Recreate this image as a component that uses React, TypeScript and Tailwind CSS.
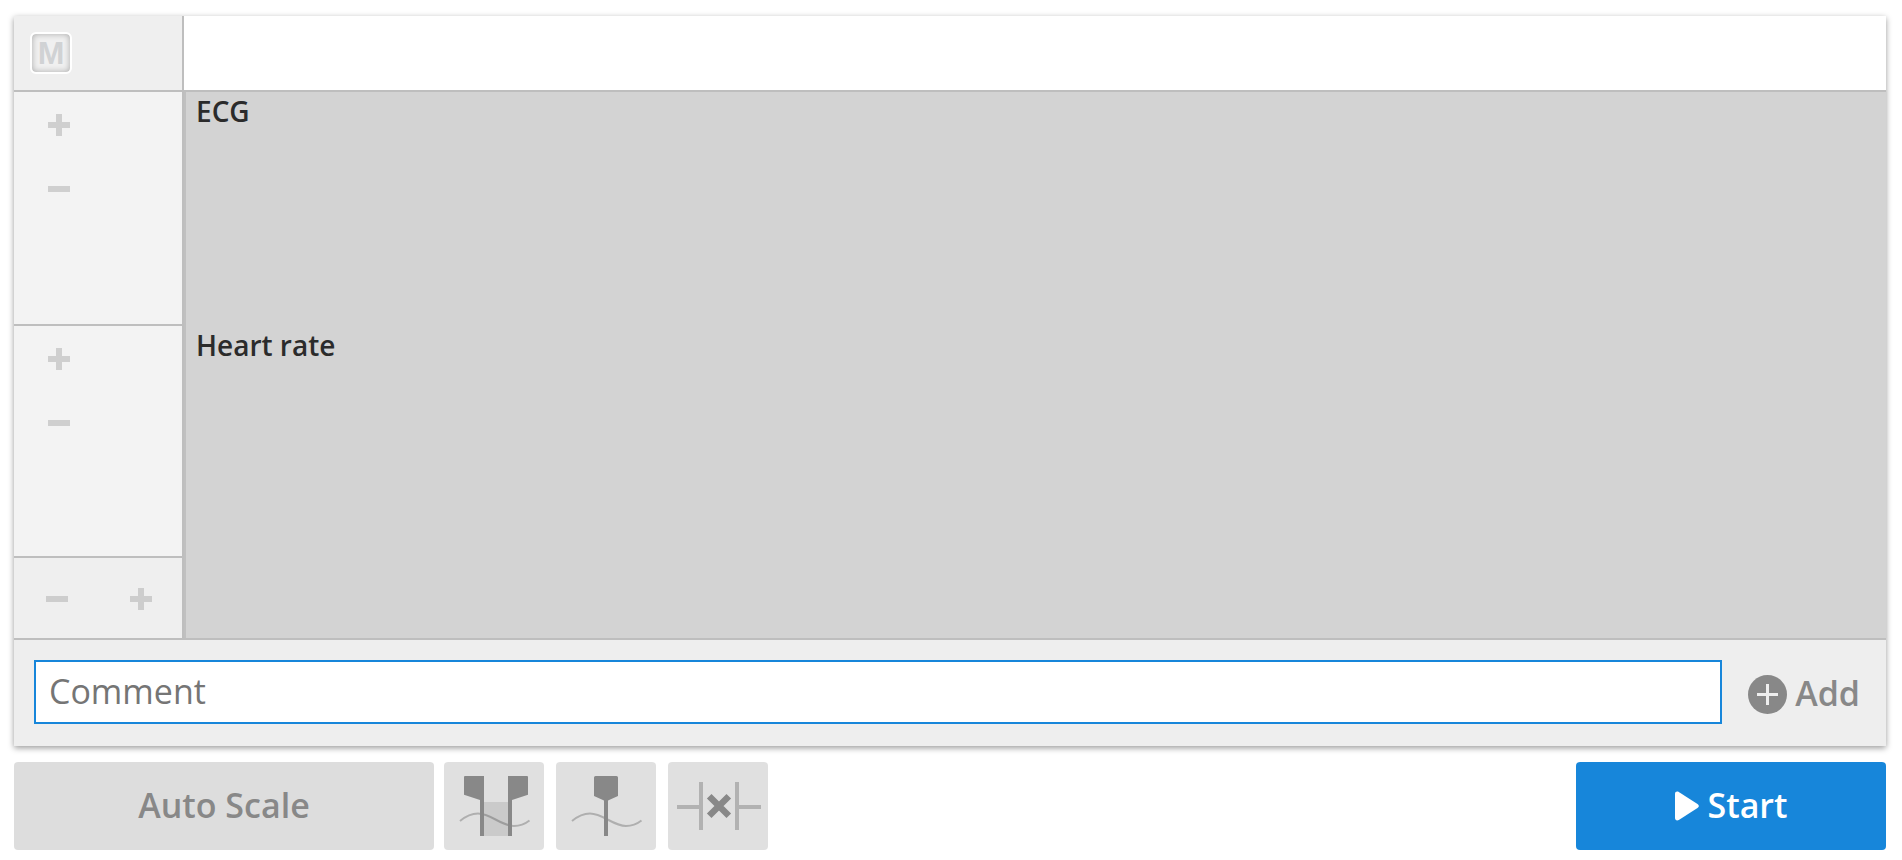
import React, { useState } from 'react';

const CHANNELS = ['ECG', 'Heart rate'];

// Shared by the marker buttons so the signal looks the same in each
const WAVE_PATH = 'M16 59C22 54 28 51.5 34 51.5C47 51.5 57 64 70 64C76 64 81 62 85.5 58.5';

const PlusIcon = () => (
  <svg className="w-[22px] h-[22px]" viewBox="0 0 22 22" fill="currentColor" shapeRendering="crispEdges">
    <path d="M8 0h6v8h8v6h-8v8H8v-8H0V8h8z" />
  </svg>
);

const MinusIcon = () => (
  <svg className="w-[22px] h-[22px]" viewBox="0 0 22 22" fill="currentColor" shapeRendering="crispEdges">
    <path d="M0 8h22v6H0z" />
  </svg>
);

const RangeIcon = () => (
  <svg className="w-[100px] h-[88px]" viewBox="0 0 100 88" fill="none">
    <path d="M40 40h24v34H40z" fill="#cacaca" />
    <path d={WAVE_PATH} stroke="#000" strokeOpacity="0.22" strokeWidth="2" />
    <path d="M21 14h19v60h-4V38l-16-5.300V15a1 1 0 0 1 1-1z" fill="#888" />
    <path d="M83 14H64v60h4V38l16-5.300V15a1 1 0 0 0-1-1z" fill="#888" />
  </svg>
);

const MarkerIcon = () => (
  <svg className="w-[100px] h-[88px]" viewBox="0 0 100 88" fill="none">
    <path d={WAVE_PATH} stroke="#000" strokeOpacity="0.22" strokeWidth="2" />
    <path d="M39.500 14h21a1.500 1.500 0 0 1 1.500 1.500v18.500L52 38.500V74h-4V38.500L38 34V15.500a1.500 1.500 0 0 1 1.500-1.500z" fill="#888" />
  </svg>
);

const ClearIcon = () => (
  <svg className="w-[100px] h-[88px]" viewBox="0 0 100 88" fill="none">
    <path d="M31 20h4v48h-4V47H9v-4h22zM67 20h4v23h22v4H71v21h-4z" fill="#b2b2b2" />
    <path d="M41.200 34.200l19.600 19.600M60.800 34.200L41.200 53.800" stroke="#888" strokeWidth="6.500" />
  </svg>
);

const AddIcon = () => (
  <svg className="w-[39px] h-[39px]" viewBox="0 0 39 39">
    <circle cx="19.500" cy="19.500" r="19.500" fill="#888" />
    <path d="M9 19.500h21M19.500 9v21" stroke="#eee" strokeWidth="3" />
  </svg>
);

const PlayIcon = () => (
  <svg className="w-6 h-[30px]" viewBox="0 0 24 30" fill="currentColor">
    <path d="M0 3C0 .8 2 0 3.800 1.100L22.500 13C24.300 14.200 24.300 15.800 22.500 17L3.800 28.900C2 30 0 29.200 0 27z" />
  </svg>
);

interface ToolButtonProps {
  label: string;
  children: React.ReactNode;
}

const ToolButton: React.FC<ToolButtonProps> = ({ label, children }) => (
  <button type="button" aria-label={label} className="rounded bg-[#e0e0e0]">
    {children}
  </button>
);

interface ChannelRowProps {
  name: string;
  last: boolean;
}

const ChannelRow: React.FC<ChannelRowProps> = ({ name, last }) => (
  <div className={last ? 'flex h-[232px]' : 'flex h-[234px]'}>
    <div className="w-[170px] shrink-0 border-r-2 border-[#bebebe] bg-[#f3f3f3]">
      <div className="flex h-full flex-col items-start gap-[42px] border-b-2 border-[#bebebe] pt-[22px] pl-[34px] text-[#cfcfcf]">
        <button type="button" aria-label={`Zoom in ${name}`}>
          <PlusIcon />
        </button>
        <button type="button" aria-label={`Zoom out ${name}`}>
          <MinusIcon />
        </button>
      </div>
    </div>
    <div className="flex-1 border-l-2 border-[#c0c0c0] pl-[10px]">
      <h2 className="text-[28px] leading-[38px] font-semibold text-[#2b2b2b]">{name}</h2>
    </div>
  </div>
);

export default function App() {
  const [comment, setComment] = useState('');

  return (
    <main className="flex flex-col gap-4 bg-white pt-4 pr-4 pb-[10px] pl-[14px] font-['Open_Sans','Noto_Sans',sans-serif]">
      <section className="shadow-[0_2px_6px_rgba(0,0,0,0.4)]">
        <div className="flex h-[76px] border-b-2 border-[#bebebe] bg-white">
          <div className="w-[170px] border-r-2 border-[#bebebe] bg-[#efefef] pt-4 pl-4">
            <button
              type="button"
              aria-label="Markers"
              className="flex h-[42px] w-[42px] items-center justify-center rounded-md border-2 border-white bg-[#f0f0f0] font-['Liberation_Sans',sans-serif] text-[32px] leading-[38px] font-bold text-[#d0d2d4] shadow-[inset_0_0_6px_rgba(0,0,0,0.3)]"
            >
              M
            </button>
          </div>
        </div>

        <div className="bg-[#d3d3d3]">
          {CHANNELS.map((name, i) => (
            <ChannelRow key={name} name={name} last={i === CHANNELS.length - 1} />
          ))}
          <div className="flex h-20">
            <div className="flex w-[170px] items-start gap-[62px] border-r-2 border-[#bebebe] bg-[#efefef] pt-[30px] pl-8 text-[#cdcdcd]">
              <button type="button" aria-label="Compress time">
                <MinusIcon />
              </button>
              <button type="button" aria-label="Expand time">
                <PlusIcon />
              </button>
            </div>
            <div className="flex-1 border-l-2 border-[#c0c0c0]" />
          </div>
        </div>

        <form
          className="flex items-center border-t-2 border-[#bebebe] bg-[#eee] pt-5 pr-[26px] pb-[22px] pl-5"
          onSubmit={(e) => e.preventDefault()}
        >
          <input
            type="text"
            aria-label="Comment"
            placeholder="Comment"
            value={comment}
            onChange={(e) => setComment(e.target.value)}
            className="h-16 min-w-0 flex-1 border-2 border-[#1786da] bg-white px-[13px] pb-[2px] text-[34px] text-[#2b2b2b] outline-none placeholder:text-[#757575]"
          />
          <button
            type="submit"
            className="ml-[26px] flex items-center gap-2 pt-1 text-[34px] leading-[44px] font-semibold text-[#888]"
          >
            <AddIcon />
            <span className="pb-[2px]">Add</span>
          </button>
        </form>
      </section>

      <div className="flex h-[88px] gap-3">
        <div className="flex gap-[10px]">
          <button type="button" className="w-[420px] rounded bg-[#ddd] pb-[2px] text-[34px] font-semibold text-[#888]">
            Auto Scale
          </button>
          <ToolButton label="Range markers">
            <RangeIcon />
          </ToolButton>
        </div>
        <ToolButton label="Single marker">
          <MarkerIcon />
        </ToolButton>
        <ToolButton label="Clear markers">
          <ClearIcon />
        </ToolButton>
        <button
          type="button"
          className="ml-auto flex w-[310px] items-center justify-center gap-[9px] rounded bg-[#1786da] text-[34px] font-semibold text-white"
        >
          <PlayIcon />
          <span className="pb-[2px]">Start</span>
        </button>
      </div>
    </main>
  );
}
